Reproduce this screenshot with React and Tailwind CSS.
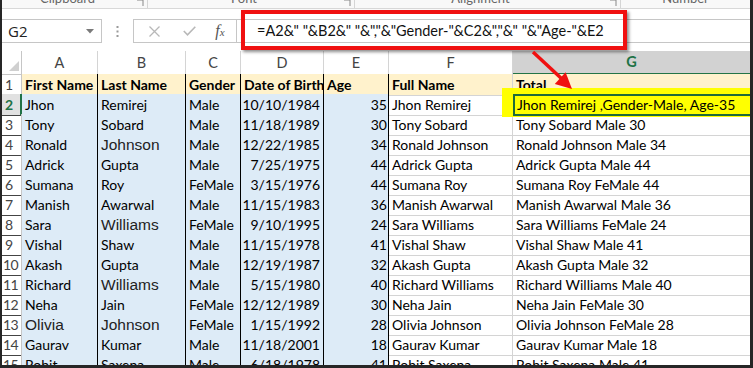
import React from "react";

const rows = [
  [2, "Jhon", "Remirej", "Male", "10/10/1984", "35", "Jhon Remirej", "Jhon Remirej ,Gender-Male, Age-35"],
  [3, "Tony", "Sobard", "Male", "11/18/1989", "30", "Tony Sobard", "Tony Sobard Male 30"],
  [4, "Ronald", "Johnson", "Male", "12/22/1985", "34", "Ronald Johnson", "Ronald Johnson Male 34"],
  [5, "Adrick", "Gupta", "Male", "7/25/1975", "44", "Adrick Gupta", "Adrick Gupta Male 44"],
  [6, "Sumana", "Roy", "FeMale", "3/15/1976", "44", "Sumana Roy", "Sumana Roy FeMale 44"],
  [7, "Manish", "Awarwal", "Male", "11/15/1983", "36", "Manish Awarwal", "Manish Awarwal Male 36"],
  [8, "Sara", "Williams", "FeMale", "9/10/1995", "24", "Sara Williams", "Sara Williams FeMale 24"],
  [9, "Vishal", "Shaw", "Male", "11/15/1978", "41", "Vishal Shaw", "Vishal Shaw Male 41"],
  [10, "Akash", "Gupta", "Male", "12/19/1987", "32", "Akash Gupta", "Akash Gupta Male 32"],
  [11, "Richard", "Williams", "Male", "5/15/1980", "40", "Richard Williams", "Richard Williams Male 40"],
  [12, "Neha", "Jain", "FeMale", "12/12/1989", "30", "Neha Jain", "Neha Jain FeMale 30"],
  [13, "Olivia", "Johnson", "FeMale", "1/15/1992", "28", "Olivia Johnson", "Olivia Johnson FeMale 28"],
  [14, "Gaurav", "Kumar", "Male", "11/18/2001", "18", "Gaurav Kumar", "Gaurav Kumar Male 18"],
  [15, "Rohit", "Saxena", "Male", "6/18/1978", "41", "Rohit Saxena", "Rohit Saxena Male 41"],
];

const arialA = new Set([13]);
const arialB = new Set([4, 8, 11, 13]);

const GRID = "grid grid-cols-[20px_76px_88px_55px_83px_65px_124px_237px]";

function RibbonGroup({ label, w, last }) {
  return (
    <div className={`${w} flex h-full ${last ? "" : "border-r border-[#d5d5d5]"}`}>
      <div className="flex-1 text-center leading-[13px] -mt-[8px]">{label}</div>
      {!last && (
        <div className="w-[14px] flex items-start justify-center">
          <svg width="7" height="6" viewBox="0 0 7 6">
            <path d="M0 0 H6 V6" fill="none" stroke="#888" strokeWidth="1" />
          </svg>
        </div>
      )}
    </div>
  );
}

export default function App() {
  return (
    <div className="relative w-[753px] h-[368px] overflow-hidden bg-white border-l-2 border-r-[3px] border-b-[3px] border-[#262626] font-['Lato',sans-serif] text-black">
      {/* ribbon labels (cut off) */}
      <div className="flex h-[9px] border-b border-[#d8d8d8] bg-[#f8f8f8] overflow-hidden text-[13px] text-[#666]">
        <RibbonGroup label="Clipboard" w="w-[146px]" />
        <RibbonGroup label="Font" w="w-[207px]" />
        <RibbonGroup label="Alignment" w="w-[266px]" />
        <RibbonGroup label="Number" w="flex-1" last />
      </div>

      {/* formula bar */}
      <div className="mt-[10px] flex h-[24px]">
        <div className="w-[100px] border border-l-0 border-[#c6c6c6] flex items-center justify-between pl-[6px] pr-[7px]">
          <span className="text-[15px] text-[#222] font-['Open_Sans',sans-serif] leading-none">G2</span>
          <svg width="8" height="5" viewBox="0 0 8 5">
            <path d="M0 0 H8 L4 4.5 Z" fill="#7a7a7a" />
          </svg>
        </div>
        <div className="w-[31px] flex items-center justify-center">
          <svg width="3" height="11" viewBox="0 0 3 11">
            <rect x="0.5" y="0" width="2" height="2" fill="#9a9a9a" />
            <rect x="0.5" y="4.5" width="2" height="2" fill="#9a9a9a" />
            <rect x="0.5" y="9" width="2" height="2" fill="#9a9a9a" />
          </svg>
        </div>
        <div className="w-[104px] border border-[#c6c6c6] flex items-center">
          <div className="w-[38px] flex justify-center pl-[2px]">
            <svg width="11" height="11" viewBox="0 0 11 11">
              <path d="M0.5 0.5 L10.5 10.5 M10.5 0.5 L0.5 10.5" stroke="#b8b8b8" strokeWidth="1.3" />
            </svg>
          </div>
          <div className="w-[34px] flex justify-center">
            <svg width="13" height="10" viewBox="0 0 13 10">
              <path d="M0.8 5 L4.5 8.8 L12.3 0.8" fill="none" stroke="#b8b8b8" strokeWidth="1.6" />
            </svg>
          </div>
          <div className="flex-1 flex justify-center pr-[2px]">
            <span className="italic font-['Liberation_Serif',serif] text-[16px] text-[#555] leading-none">
              f<span className="text-[11px]">x</span>
            </span>
          </div>
        </div>
        <div className="flex-1 border-y border-[#c6c6c6] pl-[20px] flex items-center text-[14.5px] text-[#111] whitespace-pre">
          {'=A2&" "&B2&" "&","&"Gender-"&C2&","&" "&"Age-"&E2'}
        </div>
      </div>

      {/* column headers */}
      <div className={`${GRID} mt-[8px] h-[23px] text-[14.5px] text-[#444]`}>
        <div className="relative border-r border-b border-[#c6c6c6] bg-white">
          <svg className="absolute right-[2px] bottom-[3px]" width="10" height="10" viewBox="0 0 10 10">
            <path d="M10 0 V10 H0 Z" fill="#d0d0d0" />
          </svg>
        </div>
        {["A", "B", "C", "D", "E", "F"].map((c) => (
          <div key={c} className="flex items-center justify-center border-r border-b border-[#d4d4d4] bg-white">
            {c}
          </div>
        ))}
        <div className="flex items-center justify-center bg-[#d2d2d2] border-b-2 border-[#217346] text-[#217346] font-bold">
          G
        </div>
      </div>

      {/* row 1 */}
      <div className={`${GRID} h-[20px] text-[14px] leading-[21px]`}>
        <div className="pl-[3px] border-r border-b border-[#c6c6c6] text-[#444]">1</div>
        <div className="pl-[3px] bg-[#fff2cc] border-r border-b border-black font-bold whitespace-nowrap overflow-hidden">First Name</div>
        <div className="pl-[3px] bg-[#fff2cc] border-r border-b border-black font-bold whitespace-nowrap overflow-hidden">Last Name</div>
        <div className="pl-[3px] bg-[#fff2cc] border-r border-b border-black font-bold whitespace-nowrap overflow-hidden">Gender</div>
        <div className="pl-[3px] bg-[#fff2cc] border-r border-b border-black font-bold whitespace-nowrap overflow-hidden">Date of Birth</div>
        <div className="pl-[3px] bg-[#fff2cc] border-r border-b border-black font-bold whitespace-nowrap overflow-hidden">Age</div>
        <div className="pl-[3px] bg-[#fff2cc] border-r border-b border-[#d4d4d4] font-bold whitespace-nowrap overflow-hidden">Full Name</div>
        <div className="pl-[3px] bg-[#fff2cc] border-b border-[#d4d4d4] font-bold whitespace-nowrap overflow-hidden">Total</div>
      </div>

      {/* data rows */}
      {rows.map(([n, a, b, c, d, e, f, g]) => (
        <div key={n} className={`${GRID} h-[20px] text-[14px] leading-[21px]`}>
          <div
            className={
              n === 2
                ? "pl-[3px] bg-[#e1e1e1] border-r-2 border-r-[#217346] border-b border-b-[#444] text-[#217346] font-bold"
                : n >= 10
                ? "pl-[1px] border-r border-r-[#c6c6c6] border-b border-b-[#444] text-[#444] tracking-[-0.5px]"
                : "pl-[3px] border-r border-r-[#c6c6c6] border-b border-b-[#444] text-[#444]"
            }
          >
            {n}
          </div>
          <div
            className={
              arialA.has(n)
                ? "pl-[3px] bg-[#ddebf7] border-r border-b border-black whitespace-nowrap overflow-hidden font-['Liberation_Sans',sans-serif] text-[15.5px] text-[#222]"
                : "pl-[3px] bg-[#ddebf7] border-r border-b border-black whitespace-nowrap overflow-hidden"
            }
          >
            {a}
          </div>
          <div
            className={
              arialB.has(n)
                ? "pl-[3px] bg-[#ddebf7] border-r border-b border-black whitespace-nowrap overflow-hidden font-['Liberation_Sans',sans-serif] text-[15.5px] text-[#222]"
                : "pl-[3px] bg-[#ddebf7] border-r border-b border-black whitespace-nowrap overflow-hidden"
            }
          >
            {b}
          </div>
          <div className="pl-[3px] bg-[#ddebf7] border-r border-b border-black whitespace-nowrap overflow-hidden">{c}</div>
          <div className="pr-[3px] text-right bg-[#ddebf7] border-r border-b border-black whitespace-nowrap overflow-hidden">{d}</div>
          <div className="pr-[1px] text-right bg-[#ddebf7] border-r border-b border-black whitespace-nowrap overflow-hidden">{e}</div>
          <div className="pl-[3px] border-r border-b border-[#d4d4d4] whitespace-nowrap overflow-hidden">{f}</div>
          <div className={n === 2 ? "relative z-30 pl-[4px] whitespace-nowrap overflow-hidden" : "pl-[3px] border-b border-[#d4d4d4] whitespace-nowrap overflow-hidden"}>
            {g}
          </div>
        </div>
      ))}

      {/* yellow highlight over G2 */}
      <div className="absolute left-[500px] top-[88px] w-[251px] h-[29px] bg-[#ffff00] z-10" />
      {/* selected cell border */}
      <div className="absolute left-[511px] top-[94px] w-[240px] h-[22px] border-2 border-[#1f6b3a] z-20" />

      {/* red annotation box */}
      <div className="absolute left-[239px] top-[10px] w-[386px] h-[40px] border-[4px] border-[#f01010] shadow-[2px_2px_3px_rgba(0,0,0,0.45)] z-20" />

      {/* red arrow */}
      <svg className="absolute left-0 top-0 z-40" width="753" height="368" viewBox="0 0 753 368">
        <line x1="531" y1="52" x2="560" y2="79" stroke="#f01010" strokeWidth="3.5" />
        <polygon points="570,89 552.8,84.1 563.6,72.3" fill="#f01010" />
      </svg>
    </div>
  );
}
